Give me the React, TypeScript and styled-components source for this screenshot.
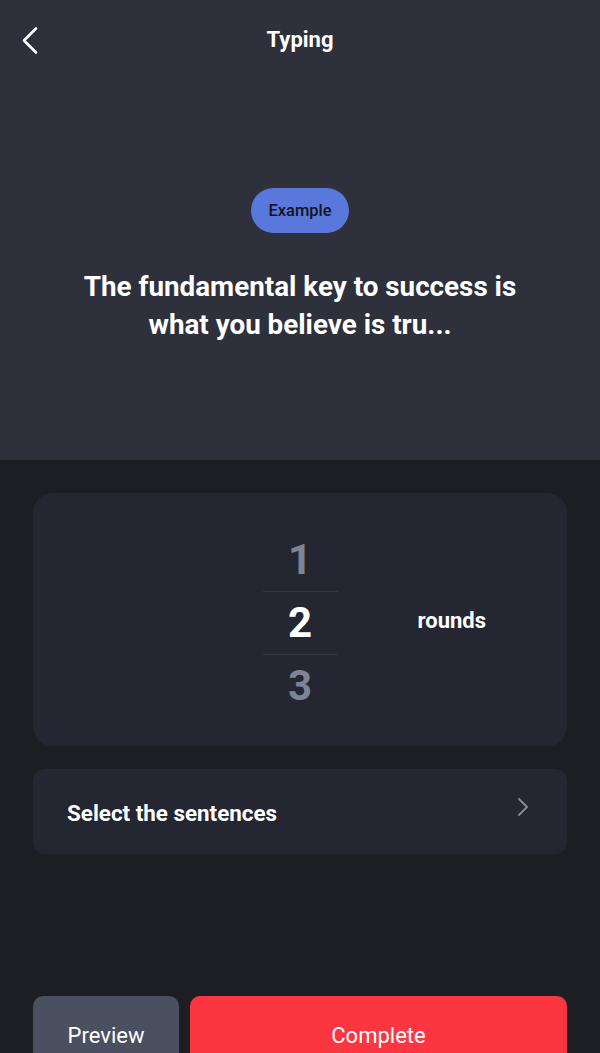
import React from "react";
import styled, { createGlobalStyle } from "styled-components";

const GlobalStyle = createGlobalStyle`
  html, body {
    margin: 0;
    padding: 0;
    background: #1d1e23;
  }
  * {
    box-sizing: border-box;
  }
  body {
    font-family: Roboto, "Noto Sans", Arial, sans-serif;
  }
`;

const Page = styled.div`
  display: flex;
  flex-direction: column;
  width: 600px;
  height: 1053px;
  overflow: hidden;
  background: #1d1e23;
  color: #ffffff;
`;

const Hero = styled.section`
  display: flex;
  flex-direction: column;
  height: 460px;
  flex-shrink: 0;
  background: #2e303c;
`;

const Header = styled.header`
  display: grid;
  grid-template-columns: 80px 1fr 80px;
  align-items: center;
  height: 80px;
`;

const BackButton = styled.button`
  display: flex;
  align-items: center;
  justify-content: flex-start;
  width: 60px;
  height: 60px;
  padding: 0 0 0 20px;
  margin-top: 2px;
  border: none;
  background: none;
  color: #ffffff;
`;

const Title = styled.h1`
  margin: -2px 0 0;
  text-align: center;
  font-size: 22px;
  font-weight: 700;
`;

const HeroBody = styled.div`
  display: flex;
  flex-direction: column;
  align-items: center;
  padding-top: 108px;
`;

const Pill = styled.span`
  display: inline-flex;
  align-items: center;
  justify-content: center;
  width: 98px;
  height: 45px;
  border-radius: 23px;
  background: #5a77dc;
  color: #12141d;
  font-size: 16.5px;
  font-weight: 500;
`;

const Sentence = styled.p`
  margin: 35px 0 0;
  max-width: 480px;
  text-align: center;
  font-size: 27.8px;
  line-height: 38px;
  font-weight: 700;
`;

const Body = styled.main`
  display: flex;
  flex-direction: column;
  flex: 1;
  padding: 33px 33px 0;
`;

const RoundsCard = styled.div`
  display: grid;
  grid-template-columns: 1fr 75px 1fr;
  align-items: center;
  height: 253px;
  border-radius: 20px;
  background: #242631;
`;

const Wheel = styled.div`
  grid-column: 2;
  display: flex;
  flex-direction: column;
  margin-top: 6px;
`;

const WheelItem = styled.div<{ $active?: boolean }>`
  display: flex;
  align-items: center;
  justify-content: center;
  height: 62px;
  font-size: 42px;
  font-weight: 700;
  color: ${(p) => (p.$active ? "#ffffff" : "#7e8496")};
`;

const Divider = styled.div`
  height: 1px;
  background: #33363f;
`;

const Unit = styled.span`
  grid-column: 3;
  padding-left: 80px;
  margin-top: 2px;
  font-size: 22px;
  font-weight: 700;
`;

const SelectRow = styled.button`
  display: flex;
  align-items: center;
  justify-content: space-between;
  height: 85px;
  margin-top: 23px;
  padding: 0 38px 0 34px;
  border: none;
  border-radius: 12px;
  background: #242631;
  color: #ffffff;
  font-family: inherit;
  font-size: 22.4px;
  font-weight: 700;
  text-align: left;
`;

const SelectLabel = styled.span`
  margin-top: 2px;
`;

const Chevron = styled.svg`
  display: block;
  margin-top: -10px;
`;

const Actions = styled.div`
  display: flex;
  gap: 11px;
  margin-top: auto;
  margin-bottom: -21px;
`;

const ActionButton = styled.button<{ $primary?: boolean }>`
  display: flex;
  align-items: center;
  justify-content: center;
  flex: ${(p) => (p.$primary ? "1" : "0 0 146px")};
  height: 78px;
  border: none;
  border-radius: 10px;
  background: ${(p) => (p.$primary ? "#fc3640" : "#4b5060")};
  color: #ffffff;
  font-family: inherit;
  font-size: 22px;
  font-weight: 400;
`;

export default function App() {
  return (
    <>
      <GlobalStyle />
      <Page>
        <Hero>
          <Header>
            <BackButton aria-label="Back">
              <svg width="20" height="30" viewBox="0 0 20 30" fill="none">
                <path
                  d="M16 2.5 L4 14.5 L16 26.5"
                  stroke="currentColor"
                  strokeWidth="2.6"
                  strokeLinecap="round"
                  strokeLinejoin="round"
                />
              </svg>
            </BackButton>
            <Title>Typing</Title>
            <span />
          </Header>
          <HeroBody>
            <Pill>Example</Pill>
            <Sentence>The fundamental key to success is what you believe is tru...</Sentence>
          </HeroBody>
        </Hero>
        <Body>
          <RoundsCard>
            <Wheel>
              <WheelItem>1</WheelItem>
              <Divider />
              <WheelItem $active>2</WheelItem>
              <Divider />
              <WheelItem>3</WheelItem>
            </Wheel>
            <Unit>rounds</Unit>
          </RoundsCard>
          <SelectRow>
            <SelectLabel>Select the sentences</SelectLabel>
            <Chevron width="12" height="20" viewBox="0 0 12 20" fill="none">
              <path
                d="M2 2 L10 10 L2 18"
                stroke="#8a8d99"
                strokeWidth="1.8"
                strokeLinecap="round"
                strokeLinejoin="round"
              />
            </Chevron>
          </SelectRow>
          <Actions>
            <ActionButton>Preview</ActionButton>
            <ActionButton $primary>Complete</ActionButton>
          </Actions>
        </Body>
      </Page>
    </>
  );
}
